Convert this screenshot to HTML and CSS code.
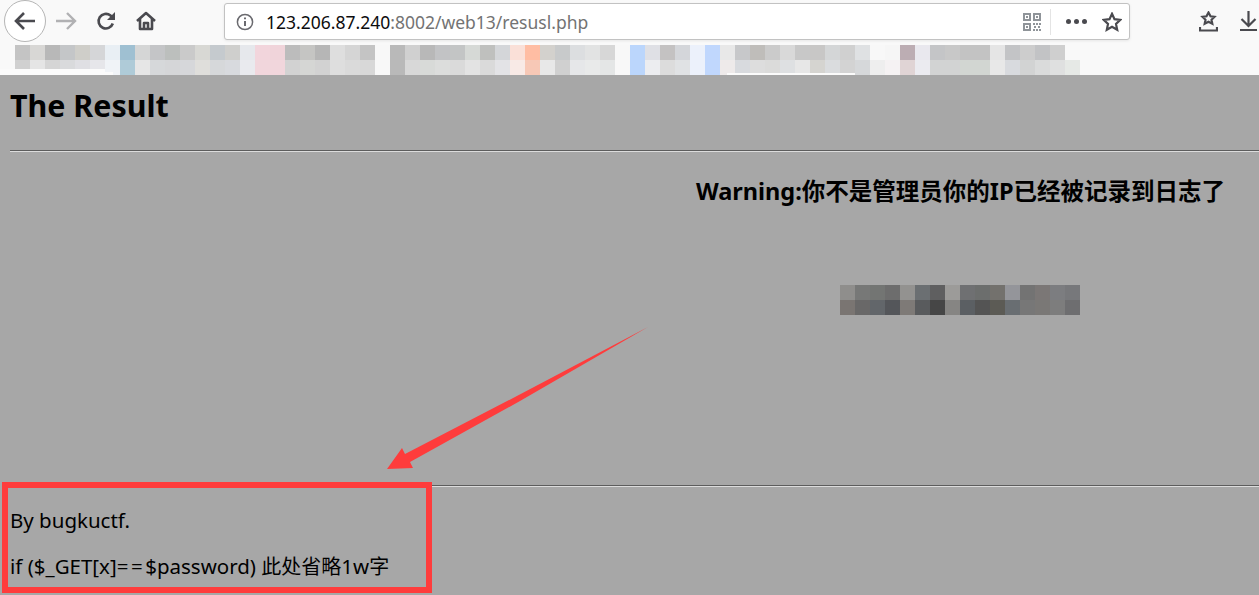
FILE: index.html
```html
<!DOCTYPE html>
<html lang="zh">
<head>
<meta charset="utf-8">
<title>The Result</title>
<link rel="stylesheet" href="styles.css">
</head>
<body>
<header class="chrome">
  <div class="toolbar">
    <div class="nav">
      <span class="back">
        <svg width="24" height="24" viewBox="0 0 24 24" fill="none" stroke="#4a4a4f" stroke-width="2.6"><path d="M22 12H3M11 4l-8 8 8 8"/></svg>
      </span>
      <svg class="fwd" width="22" height="20" viewBox="0 0 22 20" fill="none" stroke="#b1b1b3" stroke-width="2.4"><path d="M1 10h19M12 2l8 8-8 8"/></svg>
      <svg class="reload" width="20" height="20" viewBox="0 0 20 20" fill="none" stroke="#4a4a4f" stroke-width="2.6"><path d="M16.800 12.500A7.300 7.300 0 1 1 14.500 4.500L18 7.500"/><path d="M19 1v8h-8z" fill="#4a4a4f" stroke="none"/></svg>
      <svg class="home" width="20" height="20" viewBox="0 0 20 20" fill="none" stroke="#4a4a4f" stroke-width="2.600" stroke-linejoin="round"><path d="M1 10l9-8 9 8"/><path d="M4 8v10h12V8"/><path d="M8 18v-6h4v6"/></svg>
    </div>
    <div class="urlbar">
      <svg class="info" width="18" height="18" viewBox="0 0 18 18" fill="none" stroke="#6a6a6f" stroke-width="1.500"><circle cx="9" cy="9" r="7.600"/><path d="M9 8v5M9 4.500v1.800" stroke-width="2"/></svg>
      <span class="url"><span class="host">123.206.87.240</span>:8002/web13/resusl.php</span>
      <svg class="qr" width="18" height="18" viewBox="0 0 18 18" fill="#8f9499"><path fill-rule="evenodd" d="M0 0h8v8H0zM2 2v4h4V2zM10 0h8v8h-8zM12 2v4h4V2zM0 10h8v8H0zM2 12v4h4v-4z"/><path d="M3 3h2v2H3zM13 3h2v2h-2zM3 13h2v2H3zM10 10h2v2h-2zM13 10h2v2h-2zM16 10h2v2h-2zM11 13h2v2h-2zM15 13h2v2h-2zM10 16h2v2h-2zM13 16h2v2h-2zM16 16h2v2h-2z"/></svg>
      <span class="sep"></span>
      <span class="dots"><i></i><i></i><i></i></span>
      <svg class="star" width="20" height="20" viewBox="0 0 20 20" fill="none" stroke="#4a4a4f" stroke-width="2.200"><path d="M10 1.800l2.500 5.400 5.800.7-4.300 4 1.200 5.800-5.200-3-5.200 3 1.200-5.800-4.300-4 5.800-.7z"/></svg>
    </div>
    <div class="tools">
      <svg width="19" height="21" viewBox="0 0 19 21" fill="none" stroke="#4a4a4f" stroke-width="2.200"><path d="M9.500 1.500l2 3.800 4 .5-3 3 .8 4-3.800-2-3.800 2 .8-4-3-3 4-.5z"/><path d="M1 16v3.500h17V16"/></svg>
      <svg width="17" height="20" viewBox="0 0 17 20" fill="none" stroke="#4a4a4f" stroke-width="2.200"><path d="M8.500 0v15M1.500 8l7 7 7-7M0 19h17"/></svg>
    </div>
  </div>
  <svg class="mosaic" width="1259" height="30" viewBox="0 0 1259 30" shape-rendering="crispEdges">
    <g id="bookmarks"></g>
    <rect x="1065" y="15" width="15" height="15" fill="#e6e9e6"/>
    <rect x="0" y="24" width="105" height="6" fill="#fbfbfb"/>
    <rect x="105" y="27" width="8" height="3" fill="#fbfbfb"/>
    <rect x="727" y="28" width="128" height="2" fill="#fbfbfb"/>
  </svg>
</header>
<main class="page">
  <h1>The Result</h1>
  <hr>
  <div class="warn">
    <h3>Warning:你不是管理员你的IP已经被记录到日志了</h3>
    <svg class="ipblur" width="240" height="30" viewBox="0 0 240 30" shape-rendering="crispEdges">
      <g id="ip"></g>
    </svg>
  </div>
  <hr>
  <p>By bugkuctf.</p>
  <p>if ($_GET[x]<span class="eq">==</span>$password) <span class="zh">此处省略</span>1w<span class="zh">字</span></p>
</main>
<svg class="arrow" width="280" height="155" viewBox="0 0 280 155"><path d="M268 7L135 77 25 134 22 128 7 149 33 148 30 142 140 81z" fill="#fe3c3c"/></svg>
<div class="callout"></div>
<script src="mosaic.js"></script>
</body>
</html>
```
FILE: styles.css
```css
* { box-sizing: border-box; }
html, body { margin: 0; height: 595px; overflow: hidden; }
body { position: relative; background: #a7a7a7; font-family: "Noto Sans", "Noto Sans CJK SC", sans-serif; color: #000; }
.chrome { background: #f9f9f9; height: 75px; }
.toolbar { height: 45px; display: flex; align-items: center; padding: 0 0 3px 4px; }
.nav { display: flex; align-items: center; width: 220px; flex: none; }
.back { width: 42px; height: 42px; border: 1px solid #b5b5b5; border-radius: 50%; background: #fff; display: flex; align-items: center; justify-content: center; flex: none; }
.fwd { margin-left: 9px; }
.reload { margin-left: 19px; }
.home { margin-left: 20px; }
.urlbar { width: 906px; height: 37px; margin-top: 1px; background: #fff; border: 1px solid #c2c2c2; border-radius: 3px; box-shadow: 0 1px 3px rgba(0,0,0,.08); display: flex; align-items: center; padding: 0 7px 0 11px; flex: none; }
.url { font-size: 17.500px; color: #737373; margin-left: 12px; flex: 1; white-space: nowrap; }
.host { color: #0c0c0d; }
.qr { flex: none; }
.sep { width: 1px; height: 26px; background: #e4e4e4; margin: 0 15px 0 9px; }
.dots { display: flex; gap: 3px; margin-right: 15px; }
.dots i { width: 5px; height: 5px; border-radius: 50%; background: #4a4a4f; }
.tools { display: flex; align-items: center; gap: 22px; margin-left: 69px; }
.mosaic { display: block; }
.page { padding-left: 10px; height: 520px; }
h1 { margin: 0; padding-top: 9px; height: 75px; font-size: 30.400px; line-height: 44px; font-weight: 700; }
hr { margin: 0; height: 1px; border: 0; background: #5d5d5d; box-shadow: 0 1px 0 #dcdcdc; }
.warn { height: 334px; display: flex; flex-direction: column; align-items: flex-end; padding-right: 34px; }
h3 { margin: 24px 0 0; font-size: 23.500px; line-height: 32px; font-weight: 700; white-space: nowrap; }
.ipblur { display: block; margin: 78px 145px 0 0; }
p { margin: 0; font-size: 20.500px; line-height: 28px; }
hr + p { padding-top: 20px; height: 48px; }
p + p { margin-top: 18px; }
.eq { letter-spacing: 2.500px; }
.zh { font-size: 20px; }
.arrow { position: absolute; left: 380px; top: 320px; }
.callout { position: absolute; left: 2px; top: 482px; width: 430px; height: 111px; border: 6px solid #fe3c3c; }
```
FILE: mosaic.js
```js
var top1 = "c4c4c4 d8d7d5 b8b8b8 c4c6c8 cfcec9 d5d6d8 e9eff4 9fc0d2 d5d6d6 c4c5c7 bcbfbd cacaca d8d8d4 c5cace cfcfcd e6e8ec f2d5dc f0d4da bcbcbc c5c5c3 b6b6b6 dedede d5d5d5 c4c4c4 f8f8f8 b9b9b9 d0d0d0 b8b8b8 c2c3c5 c3c5c5 d6d9d6 bfc0be d4d6d9 fae0d8 ffbda3 d3d1cd c8cacb dcdee0 e2e3e3 d7d7d7 f8f8f8 bbd6fc dfe0e5 c4c2c2 d4d6da ecf1fb c0d7fd e8e8e8 c7c8ca bfbdba cbcbcb d9d9d9 c8c8c8 c8c7c6 d4d6d7 d0d0d0 dfe1e3 f8f8f8 f6f6f6 bcadb3 e9e8ee c4c5c7 c8c8c8 c3c3c3 c3c3c3 e5e5e5 c3c4c6 cdcdcd c2c3c5 cfcfcf".split(" ");
var top2 = "d0d0d0 e5e5e5 d5d5d5 d9dadc dfdfe3 e6e6ea f0f3f7 afcbd8 e6e6e6 d6d8da d5d6d8 d6d7da dfdedb d6d8da d8dade e9eaee f1d6dc f1d6dc d2d2d2 d5d6d4 d2d2d2 dedede dadada d8d8d8 f8f8f8 b9b9b9 d8d8d8 d8dad8 dcdddc dadada e3e3e3 dadada e3e3e6 f8eae6 f7c8b6 e8e8e8 d0d0d0 e6e7e9 e9eaea e4e6e6 f8f8f8 bbd6fc ecedf0 dcdcdc e0e2e4 ecf1fb c0d7fd eeeaea d8dade dddddd dbdbda dee0e2 e7e7e7 d5d4d0 dadcde d3d3d3 d6d8da eeeeee f5f2f3 e0d4d5 ebebf0 d2d3d3 d2d3d3 d2d6d2 d2d6d2 e8e8e8 d8dade d2d3d3 dadbdb dfe0e0".split(" ");
var ip1 = "8f8e8c 777877 737573 6d6d6d 939290 6b6f72 5f5f60 9c9b99 6f7072 6c6e6d 73716d 94959a 737373 7b7776 7c7d80 77787b".split(" ");
var ip2 = "7a7572 696868 62666a 54565a 7e7a77 595b5d 464646 868583 5b5f63 545454 5c5b55 696e72 777777 7a7876 7d7d7d 6e6e70".split(" ");
var ns = "http://www.w3.org/2000/svg";
function fill(id, rows, x0) {
  var g = document.getElementById(id);
  rows.forEach(function (row, r) {
    row.forEach(function (c, i) {
      var e = document.createElementNS(ns, "rect");
      e.setAttribute("x", x0 + i * 15);
      e.setAttribute("y", r * 15);
      e.setAttribute("width", 15);
      e.setAttribute("height", 15);
      e.setAttribute("fill", "#" + c);
      g.appendChild(e);
    });
  });
}
fill("bookmarks", [top1, top2], 15);
fill("ip", [ip1, ip2], 0);
```
